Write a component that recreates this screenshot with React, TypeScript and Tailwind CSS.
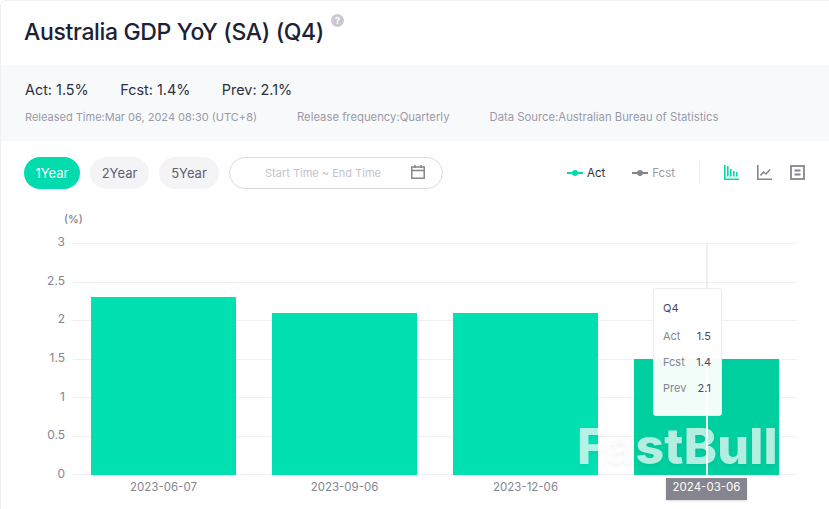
import React from "react";

function Bar({ h, dark }: { h: number; dark?: boolean }) {
  return <div className={dark ? "w-[145px] bg-[#00cfa0]" : "w-[145px] bg-[#00e0b0]"} style={{ height: h }} />;
}

export default function App() {
  const ticks = ["3", "2.5", "2", "1.5", "1", "0.5", "0"];
  return (
    <div className="w-[829px] h-[509px] overflow-hidden bg-white border-l border-t border-[#f0f0f2] rounded-tl-md font-['Inter',sans-serif] text-[#1e2233]">
      <div className="h-[64px] pl-[23px] pt-[15px] flex items-start">
        <h1 className="text-[23px] leading-[32px] font-medium tracking-[-0.35px] text-[#1c2136]">Australia GDP YoY (SA) (Q4)</h1>
        <span className="ml-[7px] mt-[-2px] w-[13px] h-[13px] rounded-full bg-[#c9c9d3] text-white text-[9px] leading-[13px] font-bold text-center">?</span>
      </div>
      <div className="h-[76px] bg-[#f8f9fb] pl-[24px] pr-[24px] pt-[15px]">
        <div className="flex gap-[31.5px] text-[14.4px] leading-[20px] text-[#2b2f40]">
          <span>Act: 1.5%</span>
          <span>Fcst: 1.4%</span>
          <span>Prev: 2.1%</span>
        </div>
        <div className="mt-[9px] flex gap-[40px] text-[11.3px] leading-[16px] text-[#9a9aa8]">
          <span className="text-[11px]">Released Time:Mar 06, 2024 08:30 (UTC+8)</span>
          <span>Release frequency:Quarterly</span>
          <span>Data Source:Australian Bureau of Statistics</span>
        </div>
      </div>
      <div className="h-[32px] mt-[16px] pl-[23px] pr-[23px] flex items-center text-[13px] leading-[30px]">
        <button className="w-[56px] h-[32px] rounded-full bg-[#00dcad] text-white">1Year</button>
        <button className="ml-[10px] w-[59px] h-[32px] rounded-full bg-[#f4f4f6] text-[#5e5f70]">2Year</button>
        <button className="ml-[10px] w-[60px] h-[32px] rounded-full bg-[#f4f4f6] text-[#5e5f70]">5Year</button>
        <div className="ml-[10px] w-[214px] h-[32px] rounded-full border border-[#dcdce0] flex items-center pl-[35px] pr-[17px] text-[11px] text-[#c3c3ce]">
          <span>Start Time ~ End Time</span>
          <svg className="ml-auto mt-[-3px]" width="14" height="14" viewBox="0 0 14 14" fill="none" stroke="#85858f" strokeWidth="1.5">
            <rect x="0.8" y="2" width="12.4" height="11.2" />
            <path d="M0.8 5.5h12.4M4 0v3M10 0v3" />
          </svg>
        </div>
        <div className="ml-auto mr-[1px] flex items-center text-[11.5px] mt-[-1px]">
          <svg width="16" height="6" viewBox="0 0 16 6"><path d="M0 3h16" stroke="#00dcad" strokeWidth="2" /><circle cx="8" cy="3" r="3" fill="#00dcad" /></svg>
          <span className="ml-[4px] text-[#2b2f40]">Act</span>
          <svg className="ml-[27px]" width="16" height="6" viewBox="0 0 16 6"><path d="M0 3h16" stroke="#85858f" strokeWidth="2" /><circle cx="8" cy="3" r="3" fill="#85858f" /></svg>
          <span className="ml-[4px] text-[#9a9aa8]">Fcst</span>
          <div className="ml-[24px] w-px h-[23px] bg-[#eeeef0]" />
          <svg className="ml-[24px]" width="15" height="15" viewBox="0 0 15 15" fill="none" stroke="#00dcad" strokeWidth="1.6">
            <path d="M0.8 0v14.2H15M3.8 1v10.5M6.8 4v7.5M9.8 6v5.5M12.8 7v4.5" />
          </svg>
          <svg className="ml-[18px]" width="15" height="15" viewBox="0 0 15 15" fill="none" stroke="#85858f" strokeWidth="1.6">
            <path d="M0.8 0v14.2H15" />
            <path d="M3.5 10.5l3-3.5 2.5 2 4-4.5" />
          </svg>
          <svg className="ml-[18px]" width="15" height="15" viewBox="0 0 15 15" fill="none" stroke="#85858f" strokeWidth="1.8">
            <rect x="1" y="1" width="13" height="13" />
            <path d="M4.5 5.5h6M4.5 9.5h6" />
          </svg>
        </div>
      </div>
      <div className="relative mt-[22px] h-[280px]">
        <div className="ml-[63px] h-[16px] text-[11px] leading-[16px] text-[#6b6c7a]">(%)</div>
        <div className="mt-[16px] flex">
          <div className="w-[64px] h-[232px] relative flex flex-col justify-between items-end text-[12px] leading-[0] text-[#85858f] mt-[-1px]">
            {ticks.map((t) => (
              <span key={t} className="h-0">{t}</span>
            ))}
          </div>
          <div className="relative ml-[8px] w-[724px] h-[232px]">
            <div className="absolute inset-0 flex flex-col justify-between">
              {ticks.map((t) => (
                <div key={t} className="h-px bg-[#efeff1]" />
              ))}
            </div>
            <div className="absolute inset-0 flex items-end justify-around">
              <Bar h={178} />
              <Bar h={162} />
              <Bar h={162} />
              <Bar h={116} dark />
            </div>
            <div className="absolute left-[633px] top-0 w-[2px] h-[232px] bg-[#eeeef0]" />
          </div>
        </div>
        <div className="ml-[72px] mt-[3px] flex w-[724px] text-[11.5px] leading-[18px] text-[#85858f]">
          <span className="w-[181px] text-center">2023-06-07</span>
          <span className="w-[181px] text-center">2023-09-06</span>
          <span className="w-[181px] text-center">2023-12-06</span>
          <span className="w-[181px] flex justify-center">
            <span className="bg-[#85858f] text-white w-[81px] h-[22px] text-center shadow-sm">2024-03-06</span>
          </span>
        </div>
        <div className="absolute left-[652px] top-[77px] w-[69px] h-[128px] rounded-[3px] border border-[#ededf0] bg-white/95 pl-[9px] pr-[10px] pt-[10px] text-[11px] text-[#85858f]">
          <div className="leading-[18px] text-[#4a4b5b]">Q4</div>
          <div className="mt-[10px] flex justify-between leading-[18px]"><span>Act</span><span className="text-[#4a4b5b]">1.5</span></div>
          <div className="mt-[8px] flex justify-between leading-[18px]"><span>Fcst</span><span className="text-[#4a4b5b]">1.4</span></div>
          <div className="mt-[8px] flex justify-between leading-[18px]"><span>Prev</span><span className="text-[#4a4b5b]">2.1</span></div>
        </div>
        <div className="absolute left-[576px] top-[209px] text-[50px] leading-[52px] font-extrabold text-white/70 tracking-[0.2px] [text-shadow:0_2px_4px_rgba(0,0,0,0.05)]">FastBull</div>
      </div>
    </div>
  );
}
